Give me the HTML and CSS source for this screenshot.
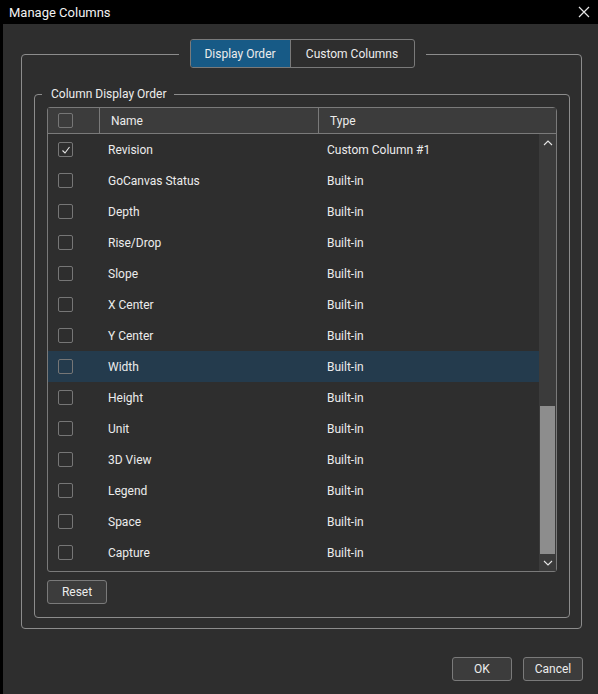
FILE: index.html
```html
<!DOCTYPE html>
<html>
<head>
<meta charset="utf-8">
<link rel="stylesheet" href="styles.css">
</head>
<body>
<div class="window">
  <div class="titlebar">
    <span class="title">Manage Columns</span>
    <svg class="close" width="12" height="12" viewBox="0 0 12 12"><path d="M1 1L11 11M11 1L1 11" stroke="#e6e6e6" stroke-width="1.2" fill="none"/></svg>
  </div>
  <div class="content">
    <div class="outer">
      <div class="tabs-wrap">
        <div class="tabs">
          <div class="tab active">Display Order</div>
          <div class="tab">Custom Columns</div>
        </div>
      </div>
      <div class="inner">
        <div class="legend-wrap"><span class="legend">Column Display Order</span></div>
        <div class="table">
          <div class="thead">
            <div class="hcell cb-cell"><span class="cb"></span></div>
            <div class="hcell name-cell">Name</div>
            <div class="hcell type-cell">Type</div>
          </div>
          <div class="tbody">
            <div class="rows">
              <div class="row"><div class="cb-cell"><span class="cb"><svg width="12" height="12" viewBox="0 0 12 12"><path d="M2.5 6.5L5 9L9.5 3" stroke="#e6e6e6" stroke-width="1.1" fill="none"/></svg></span></div><div class="name-cell">Revision</div><div class="type-cell">Custom Column #1</div></div>
              <div class="row"><div class="cb-cell"><span class="cb"></span></div><div class="name-cell">GoCanvas Status</div><div class="type-cell">Built-in</div></div>
              <div class="row"><div class="cb-cell"><span class="cb"></span></div><div class="name-cell">Depth</div><div class="type-cell">Built-in</div></div>
              <div class="row"><div class="cb-cell"><span class="cb"></span></div><div class="name-cell">Rise/Drop</div><div class="type-cell">Built-in</div></div>
              <div class="row"><div class="cb-cell"><span class="cb"></span></div><div class="name-cell">Slope</div><div class="type-cell">Built-in</div></div>
              <div class="row"><div class="cb-cell"><span class="cb"></span></div><div class="name-cell">X Center</div><div class="type-cell">Built-in</div></div>
              <div class="row"><div class="cb-cell"><span class="cb"></span></div><div class="name-cell">Y Center</div><div class="type-cell">Built-in</div></div>
              <div class="row selected"><div class="cb-cell"><span class="cb"></span></div><div class="name-cell">Width</div><div class="type-cell">Built-in</div></div>
              <div class="row"><div class="cb-cell"><span class="cb"></span></div><div class="name-cell">Height</div><div class="type-cell">Built-in</div></div>
              <div class="row"><div class="cb-cell"><span class="cb"></span></div><div class="name-cell">Unit</div><div class="type-cell">Built-in</div></div>
              <div class="row"><div class="cb-cell"><span class="cb"></span></div><div class="name-cell">3D View</div><div class="type-cell">Built-in</div></div>
              <div class="row"><div class="cb-cell"><span class="cb"></span></div><div class="name-cell">Legend</div><div class="type-cell">Built-in</div></div>
              <div class="row"><div class="cb-cell"><span class="cb"></span></div><div class="name-cell">Space</div><div class="type-cell">Built-in</div></div>
              <div class="row"><div class="cb-cell"><span class="cb"></span></div><div class="name-cell">Capture</div><div class="type-cell">Built-in</div></div>
            </div>
            <div class="scrollbar">
              <div class="sb-btn"><svg width="10" height="6" viewBox="0 0 10 6"><path d="M1 5L5 1L9 5" stroke="#e6e6e6" stroke-width="1.1" fill="none"/></svg></div>
              <div class="sb-track"><div class="sb-thumb"></div></div>
              <div class="sb-btn"><svg width="10" height="6" viewBox="0 0 10 6"><path d="M1 1L5 5L9 1" stroke="#e6e6e6" stroke-width="1.1" fill="none"/></svg></div>
            </div>
          </div>
        </div>
        <div class="reset-row"><button class="btn">Reset</button></div>
      </div>
    </div>
    <div class="footer">
      <button class="btn">OK</button>
      <button class="btn">Cancel</button>
    </div>
  </div>
</div>
</body>
</html>
```
FILE: styles.css
```css
* { box-sizing: border-box; }
html, body { margin: 0; padding: 0; background: #000; }
body {
  font-family: Roboto, "Liberation Sans", sans-serif;
  font-size: 12px;
  color: #ececec;
  width: 598px;
  height: 694px;
  overflow: hidden;
}
.window {
  display: flex;
  flex-direction: column;
  height: 694px;
}
.titlebar {
  height: 24px;
  background: #000;
  display: flex;
  align-items: center;
  justify-content: space-between;
  padding: 0 8px 0 9px;
}
.title { font-size: 13px; color: #f2f2f2; }
.close { display: block; }
.content {
  flex: 1;
  background: #2e2e2e;
  margin-left: 3px;
  display: flex;
  flex-direction: column;
  padding-top: 30px;
}
.outer {
  margin: 0 16px 0 18px;
  border: 1px solid #8c8c8c;
  border-radius: 4px;
  display: flex;
  flex-direction: column;
  padding: 0 11px 10px 12px;
}
.tabs-wrap {
  align-self: center;
  margin-top: -16px;
  background: #2e2e2e;
  padding: 0 11px;
}
.tabs {
  display: flex;
  border: 1px solid #7a7a7a;
  border-radius: 3px;
  overflow: hidden;
  height: 29px;
}
.tab {
  display: flex;
  align-items: center;
  justify-content: center;
  height: 100%;
  color: #ececec;
}
.tab:first-child { width: 100px; border-right: 1px solid #7a7a7a; }
.tab:last-child { width: 123px; }
.tab.active { background: #175a86; }
.inner {
  margin-top: 26px;
  border: 1px solid #8c8c8c;
  border-radius: 4px;
  padding: 0 12px 13px 12px;
  display: flex;
  flex-direction: column;
}
.legend-wrap {
  display: flex;
  margin-top: -8px;
  margin-left: -5px;
}
.legend {
  background: #2e2e2e;
  padding: 0 8px 0 9px;
  line-height: 15px;
  color: #ececec;
}
.table {
  margin-top: 5px;
  border: 1px solid #7a7a7a;
  border-radius: 3px 4px 3px 3px;
  display: flex;
  flex-direction: column;
  height: 465px;
}
.thead {
  display: flex;
  height: 26px;
  background: #3c3c3c;
  border-bottom: 1px solid #7a7a7a;
}
.hcell { display: flex; align-items: center; }
.thead .cb-cell { width: 52px; border-right: 1px solid #7a7a7a; }
.thead .name-cell { width: 219px; border-right: 1px solid #7a7a7a; padding-left: 11px; }
.thead .type-cell { flex: 1; padding-left: 11px; }
.cb-cell { width: 51px; display: flex; align-items: center; padding-left: 10px; }
.cb {
  width: 15px;
  height: 15px;
  border: 1px solid #767676;
  border-radius: 2px;
  display: flex;
  align-items: center;
  justify-content: center;
}
.tbody {
  flex: 1;
  display: flex;
  overflow: hidden;
}
.rows { flex: 1; display: flex; flex-direction: column; }
.row {
  height: 31px;
  display: flex;
  align-items: center;
  flex-shrink: 0;
}
.row.selected { background: #243b4d; }
.row .name-cell { width: 219px; padding-left: 9px; }
.row .type-cell { flex: 1; padding-left: 9px; }
.scrollbar {
  width: 17px;
  background: #3b3b3b;
  display: flex;
  flex-direction: column;
}
.sb-btn {
  height: 17px;
  display: flex;
  align-items: center;
  justify-content: center;
}
.sb-track {
  flex: 1;
  display: flex;
  flex-direction: column;
  justify-content: flex-end;
  padding: 0 1px;
}
.sb-thumb { height: 148px; background: #8d8d8d; }
.reset-row { display: flex; margin-top: 8px; }
.btn {
  font-family: Roboto, "Liberation Sans", sans-serif;
  font-size: 12px;
  color: #ececec;
  background: #3c3c3c;
  border: 1px solid #7a7a7a;
  border-radius: 3px;
  height: 24px;
  width: 60px;
  padding: 0;
}
.footer {
  display: flex;
  justify-content: flex-end;
  gap: 11px;
  padding: 28px 15px 0 0;
}
```
